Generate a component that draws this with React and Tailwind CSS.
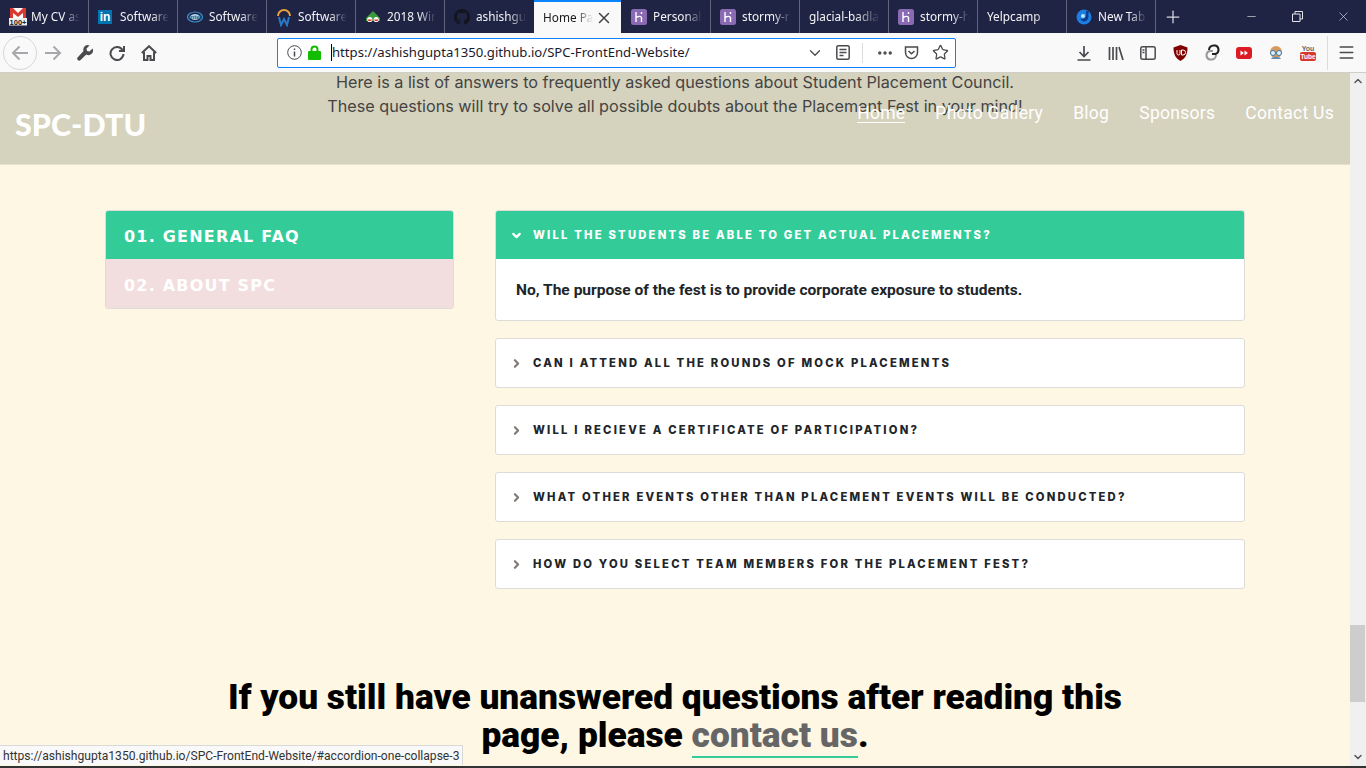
import React from "react";
import { ChevronDown, ChevronRight, Ellipsis, Menu, Minus, Plus, Star, X } from "lucide-react";

const Gmail = () => (
  <svg width="18" height="19" viewBox="0 0 18 19">
    <path d="M1 1h16v11H1z" fill="#fff" />
    <path d="M1 1h3l5 5 5-5h3v11h-3V6L9 10 4 6v6H1z" fill="#d93a2f" />
    <rect x="0" y="11" width="18" height="7.500" fill="#eee" />
    <text x="9" y="17.500" fontSize="7.500" fontWeight="700" textAnchor="middle" fill="#222" fontFamily="Liberation Sans">100+</text>
  </svg>
);
const Linked = () => (
  <div className="w-[14px] h-[14px] bg-[#0073b1] text-white text-[12px] leading-[14px] font-bold text-center font-['Liberation_Sans',sans-serif]">in</div>
);
const Intel = () => (
  <svg width="16" height="14" viewBox="0 0 16 14">
    <ellipse cx="8" cy="7" rx="7.500" ry="5" fill="none" stroke="#3d8fc9" strokeWidth="1.200" />
    <ellipse cx="8" cy="7" rx="5" ry="3" fill="#a9d2ec" />
    <text x="8" y="9" fontSize="6" fontWeight="700" textAnchor="middle" fill="#1a5f96" fontFamily="Liberation Sans">intel</text>
  </svg>
);
const Wipro = () => (
  <svg width="16" height="20" viewBox="0 0 16 20">
    <path d="M2 9a6 6 0 0 1 12 0" fill="none" stroke="#e8a33d" strokeWidth="2" />
    <path d="M3 10l2 8 3-6 3 6 2-8" fill="none" stroke="#2a79c4" strokeWidth="2" />
  </svg>
);
const Win = () => (
  <svg width="16" height="14" viewBox="0 0 16 14">
    <path d="M8 1l7 7v3H1V8z" fill="#3d9a3a" />
    <circle cx="4.800" cy="9.500" r="2.600" fill="#fff" />
    <circle cx="11.200" cy="9.500" r="2.600" fill="#fff" />
    <path d="M2.500 9.500h4.500a2.300 2.300 0 0 1-4.500 0zM9 9.500h4.500a2.300 2.300 0 0 1-4.500 0z" fill="#d8342a" />
  </svg>
);
const Github = () => (
  <svg width="16" height="16" viewBox="0 0 16 16">
    <path fill="#14151c" d="M8 0C3.58 0 0 3.58 0 8c0 3.54 2.29 6.53 5.47 7.59.4.07.55-.17.55-.38v-1.49c-2.01.37-2.53-.49-2.69-.94-.09-.23-.48-.94-.82-1.13-.28-.15-.68-.52-.01-.53.63-.01 1.08.58 1.23.82.72 1.21 1.87.87 2.33.66.07-.52.28-.87.51-1.07-1.78-.2-3.64-.89-3.64-3.95 0-.87.31-1.59.82-2.15-.08-.2-.36-1.02.08-2.12 0 0 .67-.21 2.2.82a7.4 7.4 0 0 1 4 0c1.53-1.04 2.2-.82 2.2-.82.44 1.1.16 1.92.08 2.12.51.56.82 1.27.82 2.15 0 3.07-1.87 3.75-3.65 3.95.29.25.54.73.54 1.48v2.2c0 .21.15.46.55.38A8.01 8.01 0 0 0 16 8c0-4.42-3.58-8-8-8z" />
  </svg>
);
const Heroku = () => (
  <svg width="16" height="16" viewBox="0 0 16 16">
    <rect width="16" height="16" rx="2.500" fill="#8a6bb3" />
    <path d="M5 3v10M5 8.500c3-1.500 5-1.500 5.500 0V13M10.500 3v2" fill="none" stroke="#fff" strokeWidth="1.400" />
  </svg>
);
const Nightly = () => (
  <svg width="16" height="16" viewBox="0 0 16 16">
    <circle cx="8" cy="8" r="7.500" fill="#1a7fe0" />
    <path d="M10 1.500l3 1.500-.8 3c1 3.200-1.200 6.500-4.200 6.500-2 0-3.500-1.500-3.500-3 2 1 5 0 5.500-2.500C10.500 5 10 3.500 10 1.500z" fill="#0d3c8c" />
    <circle cx="7" cy="7" r="2" fill="#bfe0ff" />
  </svg>
);

const tabs = [
  { label: "My CV as", icon: <Gmail /> },
  { label: "Software", icon: <Linked /> },
  { label: "Software", icon: <Intel /> },
  { label: "Software", icon: <Wipro /> },
  { label: "2018 Win", icon: <Win /> },
  { label: "ashishgu", icon: <Github />, beforeActive: true },
  { label: "Home Pa", active: true },
  { label: "Personal", icon: <Heroku /> },
  { label: "stormy-r", icon: <Heroku /> },
  { label: "glacial-badla" },
  { label: "stormy-h", icon: <Heroku /> },
  { label: "Yelpcamp" },
  { label: "New Tab", icon: <Nightly /> },
];

const Tab = ({ tab }) => {
  if (tab.active) {
    return (
      <div className="w-[87px] mr-px h-[33px] bg-[#f9f9fa] border-t-2 border-[#0a84ff] flex items-center pl-[9px] text-[#18191a] shrink-0">
        <span className="w-[50px] overflow-hidden whitespace-nowrap [mask-image:linear-gradient(to_right,black_65%,transparent)]">{tab.label}</span>
        <X size={18} strokeWidth={2} className="ml-[2px] text-[#444]" />
      </div>
    );
  }
  return (
    <div className={"w-[89px] h-[33px] flex items-center pl-[9px] shrink-0 " + (tab.beforeActive ? "" : "border-r border-[#62647c]")}>
      {tab.icon && <div className="w-[22px] shrink-0 flex items-center">{tab.icon}</div>}
      <span className="overflow-hidden whitespace-nowrap mr-[8px] flex-1 [mask-image:linear-gradient(to_right,black_65%,transparent_100%)]">{tab.label}</span>
    </div>
  );
};

const TabBar = () => (
  <div className="h-[33px] bg-[#1f2344] flex text-[#f4f4f6] text-[11.800px] font-['Noto_Sans',sans-serif] shrink-0">
    {tabs.map((t, i) => (
      <Tab tab={t} key={i} />
    ))}
    <div className="w-[34px] flex items-center justify-center text-[#d8d9e0]">
      <Plus size={20} strokeWidth={1.500} />
    </div>
    <div className="flex-1 flex items-center justify-end text-[#e4e5ea]">
      <div className="w-[46px] flex justify-center"><Minus size={13} strokeWidth={1.200} /></div>
      <div className="w-[46px] flex justify-center">
        <svg width="11" height="11" viewBox="0 0 11 11" fill="none" stroke="currentColor"><path d="M.5 3h7.500v7.500H.5zM3 3V.5h7.500V8H8" /></svg>
      </div>
      <div className="w-[46px] flex justify-center"><X size={15} strokeWidth={1} /></div>
    </div>
  </div>
);

const Btn = ({ w = 32, children }) => (
  <div className="flex items-center justify-center shrink-0 text-[#4a4a4f]" style={{ width: w }}>{children}</div>
);

const Toolbar = () => (
  <div className="h-[40px] bg-[#f9f9fa] border-b border-[#d0cfc6] flex items-center shrink-0">
    <div className="ml-[3px] w-[34px] h-[34px] rounded-full border border-[#d7d7db] flex items-center justify-center text-[#a8a8ac]">
      <svg width="18" height="16" viewBox="0 0 18 16" fill="none" stroke="currentColor" strokeWidth="2"><path d="M17 8H2M8.500 1.500L2 8l6.500 6.500" /></svg>
    </div>
    <div className="w-[32px] flex justify-center text-[#a8a8ac]">
      <svg width="18" height="16" viewBox="0 0 18 16" fill="none" stroke="currentColor" strokeWidth="2"><path d="M1 8h15M9.500 1.500L16 8l-6.500 6.500" /></svg>
    </div>
    <Btn>
      <svg width="16" height="16" viewBox="0 0 16 16" fill="currentColor"><path d="M15.500 3.500l-3 3-2.500-.5-.5-2.500 3-3a4.500 4.500 0 0 0-6 5.500L.8 12.200a1.800 1.800 0 0 0 2.800 2.800L9.300 9.500a4.500 4.500 0 0 0 6.200-6z" /></svg>
    </Btn>
    <Btn>
      <svg width="16" height="16" viewBox="0 0 16 16" fill="none" stroke="currentColor" strokeWidth="2"><path d="M13.500 5A6.500 6.500 0 1 0 14.500 9" /><path d="M15 1v5h-5" strokeWidth="2" /></svg>
    </Btn>
    <Btn>
      <svg width="16" height="16" viewBox="0 0 16 16" fill="none" stroke="currentColor" strokeWidth="2"><path d="M.8 8L8 1.200 15.200 8" /><path d="M3 7v8h3.500v-4h3v4H13V7" /></svg>
    </Btn>
    <div className="ml-[112px] w-[679px] h-[30px] bg-white border border-[#0a84ff] rounded-[2px] flex items-center text-[#1a1a2e] font-['Noto_Sans',sans-serif] relative">
      <div className="w-[30px] pl-[9px] text-[#4a4a4f]">
        <svg width="15" height="15" viewBox="0 0 15 15" fill="none" stroke="currentColor"><circle cx="7.500" cy="7.500" r="6.800" /><path d="M7.500 6.500V11.500M7.500 3.500v1.600" strokeWidth="1.500" /></svg>
      </div>
      <svg width="13" height="15" viewBox="0 0 13 15" fill="#12bc00"><path fillRule="evenodd" d="M2.500 6V4.500a4 4 0 0 1 8 0V6H12a1 1 0 0 1 1 1v7a1 1 0 0 1-1 1H1a1 1 0 0 1-1-1V7a1 1 0 0 1 1-1zM4.500 6h4V4.500a2 2 0 0 0-4 0z" /></svg>
      <div className="ml-[10px] border-l border-black h-[17px] flex items-center whitespace-nowrap text-[13.150px] leading-none">https://ashishgupta1350.github.io/SPC-FrontEnd-Website/</div>
      <div className="ml-auto flex items-center text-[#4a4a4f] h-full">
        <ChevronDown size={18} strokeWidth={1.700} />
        <div className="w-[38px] flex justify-center">
          <svg width="14" height="15" viewBox="0 0 14 15" fill="none" stroke="currentColor" strokeWidth="1.500"><rect x=".8" y=".8" width="12.400" height="13.400" rx="1.500" /><path d="M3.500 4.500h7M3.500 7.500h7M3.500 10.500h4" /></svg>
        </div>
        <div className="h-[20px] border-l border-[#dcdcde]" />
        <div className="ml-[9px] w-[26px] flex justify-center"><Ellipsis size={18} strokeWidth={2.500} /></div>
        <div className="w-[27px] flex justify-center">
          <svg width="15" height="14" viewBox="0 0 15 14" fill="none" stroke="currentColor" strokeWidth="1.500"><path d="M1.500 1h12v5.500a6 6 0 0 1-12 0z" /><path d="M4.500 5l3 2.800 3-2.800" /></svg>
        </div>
        <div className="w-[30px] flex justify-center"><Star size={17} strokeWidth={1.800} /></div>
      </div>
    </div>
    <div className="ml-[112px] flex items-center">
      <Btn>
        <svg width="16" height="16" viewBox="0 0 16 16" fill="none" stroke="currentColor" strokeWidth="1.700"><path d="M8 1v10M3.500 7L8 11.500 12.500 7M1.500 15h13" /></svg>
      </Btn>
      <Btn>
        <svg width="16" height="14" viewBox="0 0 16 14" fill="none" stroke="currentColor" strokeWidth="1.700"><path d="M1.500 1v13M5 1v13M8.500 1v13M11 1l4 13" /></svg>
      </Btn>
      <Btn>
        <svg width="16" height="14" viewBox="0 0 16 14" fill="none" stroke="currentColor" strokeWidth="1.500"><rect x=".8" y=".8" width="14.400" height="12.400" rx="2" /><path d="M6 1v12" /><path d="M2.500 4h2M2.500 6.500h2" /></svg>
      </Btn>
      <Btn>
        <svg width="15" height="16" viewBox="0 0 15 16"><path d="M7.500 0l7 2.500c0 6-1.500 10.500-7 13.500C2 13 .5 8.500.5 2.500z" fill="#800000" /><path d="M4 5v3.500a1.500 1.500 0 0 0 3 0V5M8.500 5v5H10a2.500 2.500 0 0 0 0-5z" fill="none" stroke="#fff" /></svg>
      </Btn>
      <Btn>
        <svg width="17" height="17" viewBox="0 0 17 17" fill="none" strokeWidth="2"><path d="M5 6a4.500 4.500 0 0 1 4.500-4.500h2A4.500 4.500 0 0 1 11.500 10H8" stroke="#222" /><path d="M12 11a4.500 4.500 0 0 1-4.500 4.500h-2A4.500 4.500 0 0 1 5.500 7H9" stroke="#999" /></svg>
      </Btn>
      <Btn>
        <svg width="16" height="12" viewBox="0 0 16 12"><rect width="16" height="12" rx="3" fill="#dc1c24" /><path d="M4.500 3.500L8 6 4.500 8.500zM8.500 3.500L12 6 8.500 8.500z" fill="#fff" /></svg>
      </Btn>
      <Btn>
        <svg width="16" height="16" viewBox="0 0 16 16"><circle cx="8" cy="7" r="6" fill="#d69a5c" /><path d="M3 14c1-3 9-3 10 0z" fill="#5d8fb5" /><circle cx="5" cy="8" r="2.500" fill="#dff1fb" stroke="#3b79a6" /><circle cx="11" cy="8" r="2.500" fill="#dff1fb" stroke="#3b79a6" /></svg>
      </Btn>
      <Btn>
        <svg width="16" height="16" viewBox="0 0 16 16"><rect x="0" y="7" width="16" height="9" rx="2" fill="#d9372a" /><text x="8" y="6" fontSize="7" fontWeight="700" textAnchor="middle" fill="#666" fontFamily="Liberation Sans">You</text><text x="8" y="14" fontSize="6.500" fontWeight="700" textAnchor="middle" fill="#fff" fontFamily="Liberation Sans">Tube</text></svg>
      </Btn>
      <div className="h-[34px] ml-[3px] border-l border-[#dcdcde]" />
      <div className="ml-[9px] text-[#4a4a4f]"><Menu size={19} strokeWidth={1.700} /></div>
    </div>
  </div>
);

const questions = [
  "CAN I ATTEND ALL THE ROUNDS OF MOCK PLACEMENTS",
  "WILL I RECIEVE A CERTIFICATE OF PARTICIPATION?",
  "WHAT OTHER EVENTS OTHER THAN PLACEMENT EVENTS WILL BE CONDUCTED?",
  "HOW DO YOU SELECT TEAM MEMBERS FOR THE PLACEMENT FEST?",
];

const questionText = "pt-px font-['Inter',sans-serif] font-extrabold text-[11.250px] tracking-[2.200px]";

const Header = () => (
  <div className="h-[92px] bg-[#d5d2bd] relative flex items-start justify-between pl-[15px] pr-[16px] shrink-0 border-b border-[#e6e2cc]">
    <div className="absolute left-0 right-0 top-0 text-center text-[#444] text-[16.200px] leading-[24px] font-['Inter',sans-serif]">
      <p className="-mt-[3px]">Here is a list of answers to frequently asked questions about Student Placement Council.</p>
      <p>These questions will try to solve all possible doubts about the Placement Fest in your mind!</p>
    </div>
    <div className="relative mt-[33px] text-white text-[30.500px] leading-[36px] font-black font-['Lato',sans-serif]">SPC-DTU</div>
    <nav className="relative mt-[27px] flex gap-[30px] text-white text-[17.500px] leading-[26px] font-['Roboto',sans-serif] tracking-[0.280px]">
      <a className="border-b border-white h-[23px] leading-[26px]">Home</a>
      <a>Photo Gallery</a>
      <a>Blog</a>
      <a>Sponsors</a>
      <a>Contact Us</a>
    </nav>
  </div>
);

const App = () => {
  return (
    <div className="w-[1366px] h-[768px] overflow-hidden flex flex-col bg-[#fef7e3]">
      <TabBar />
      <Toolbar />
      <div className="flex flex-1 min-h-0">
        <div className="w-[1350px] relative overflow-hidden flex flex-col">
          <Header />
          <div className="flex pl-[105px] pt-[45px] gap-[41px]">
            <div className="w-[349px] h-[99px] rounded-[3px] border border-[#dedcd8] overflow-hidden font-['DejaVu_Sans',sans-serif] font-bold text-[16px] tracking-[1.200px] text-white">
              <div className="h-[48px] bg-[#33cc99] pl-[18px] leading-[52px]">01. GENERAL FAQ</div>
              <div className="h-[49px] bg-[#f2dedf] pl-[18px] leading-[53px]">02. ABOUT SPC</div>
            </div>
            <div className="w-[750px] flex flex-col gap-[17px]">
              <div className="h-[111px] bg-white rounded-[3px] border border-[#dedcd8] overflow-hidden">
                <div className="h-[48px] bg-[#33cc99] flex items-center pl-[14px] text-white">
                  <ChevronDown size={13} strokeWidth={4} className="mr-[10px]" />
                  <span className={questionText}>WILL THE STUDENTS BE ABLE TO GET ACTUAL PLACEMENTS?</span>
                </div>
                <p className="pl-[20px] pt-[20px] text-[15.550px] leading-[22px] font-bold font-['Roboto',sans-serif] text-[#212529]">No, The purpose of the fest is to provide corporate exposure to students.</p>
              </div>
              {questions.map((q) => (
                <div key={q} className="h-[50px] bg-white rounded-[3px] border border-[#dedcd8] flex items-center pl-[14px] text-[#212529]">
                  <ChevronRight size={13} strokeWidth={4} className="mr-[10px] text-[#827a76]" />
                  <span className={questionText}>{q}</span>
                </div>
              ))}
            </div>
          </div>
          <h2 className="mt-[89px] w-[900px] mx-auto text-center text-black text-[35.300px] leading-[38px] font-black font-['Roboto',sans-serif]">
            If you still have unanswered questions after reading this page, please{" "}
            <a className="text-[#666] border-b-2 border-[#33cc99]">contact us</a>.
          </h2>
          <div className="absolute left-0 bottom-[1px] w-[463px] h-[20px] bg-[#f9f9fa] border-t border-r border-[#d9d9d9] pl-[3px] text-[12.100px] leading-[20px] text-[#333] font-['Roboto',sans-serif] whitespace-nowrap">
            https://ashishgupta1350.github.io/SPC-FrontEnd-Website/#accordion-one-collapse-3
          </div>
        </div>
        <div className="w-[16px] bg-[#f0f0f0] flex flex-col items-center justify-between relative text-[#555]">
          <ChevronDown size={12} strokeWidth={3} className="rotate-180 mt-[2px]" />
          <div className="absolute top-[552px] left-0 w-[15px] h-[77px] bg-[#cdcdcd]" />
          <ChevronDown size={12} strokeWidth={3} className="mb-[3px]" />
        </div>
      </div>
      <div className="h-[2px] bg-[#333] shrink-0" />
    </div>
  );
};

export default App;
